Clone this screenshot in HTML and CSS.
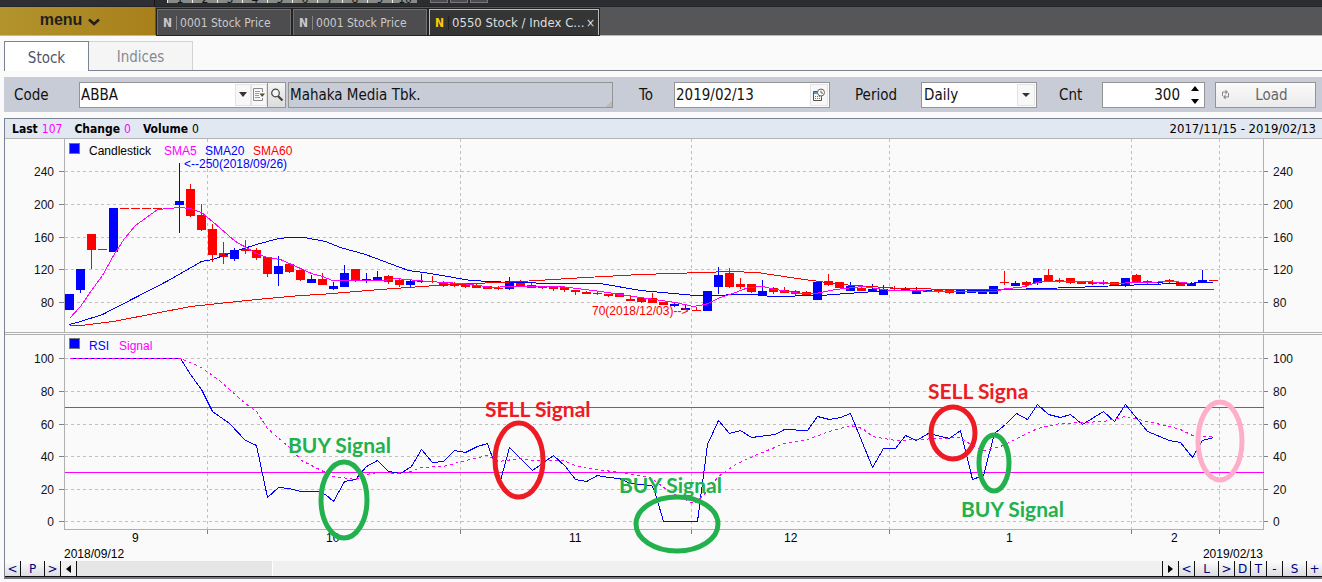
FILE: index.html
```
<!DOCTYPE html>
<html lang="en">
<head>
<meta charset="utf-8">
<title>0550 Stock / Index Chart</title>
<link rel="stylesheet" href="styles.css">
</head>
<body>
<div class="topstrip">
  <div class="pages">
    <button>1</button><button>2</button><button>3</button><button>4</button><button>5</button><button>6</button><button>7</button><button>8</button><button>9</button><button>10</button>
  </div>
  <div class="minis"><i></i><i></i><i></i></div>
</div>

<header class="appbar">
  <button class="menu">menu
    <svg width="12" height="8" viewBox="0 0 12 8"><path d="M1 1.5 6 6 11 1.5" fill="none" stroke="#231f20" stroke-width="2.6"/></svg>
  </button>
  <nav class="windows">
    <button class="win"><b>N</b><span>0001 Stock Price</span></button>
    <button class="win"><b>N</b><span>0001 Stock Price</span></button>
    <button class="win win-active"><b>N</b><span>0550 Stock / Index C...</span><em>×</em></button>
  </nav>
</header>

<div class="tabs" role="tablist">
  <button class="tab tab-active" role="tab" aria-selected="true">Stock</button>
  <button class="tab" role="tab" aria-selected="false">Indices</button>
</div>

<form class="toolbar">
  <label class="lbl-code" for="code">Code</label>
  <div class="field field-code">
    <input id="code" type="text" value="ABBA">
    <button type="button" class="inner" aria-label="Recent codes"><svg width="8" height="5" viewBox="0 0 8 5"><path d="M0 0h8L4 5z" fill="#333"/></svg></button>
    <button type="button" class="inner" aria-label="Code list"><svg width="14" height="14" viewBox="0 0 14 14"><path d="M10.500 4V.5H1.500v12h9V10" fill="none" stroke="#8a8a8a"/><path d="M3 3.500h5M3 5.500h4M3 7.500h4M3 9.500h5" stroke="#999"/><path d="M7.500 5.500h5.500L10.200 9z" fill="#54502c"/></svg></button>
  </div>
  <button type="button" class="search" aria-label="Search"><svg width="14" height="14" viewBox="0 0 14 14"><circle cx="5.500" cy="5" r="3.800" fill="#f4f4f4" stroke="#444" stroke-width="1.200"/><path d="M8 8l4.500 4.500" stroke="#444" stroke-width="2.200"/></svg></button>
  <input class="name" type="text" value="Mahaka Media Tbk." readonly aria-label="Name">
  <label class="lbl-to" for="to">To</label>
  <div class="field field-date">
    <input id="to" type="text" value="2019/02/13">
    <button type="button" class="inner" aria-label="Calendar"><svg width="14" height="14" viewBox="0 0 14 14"><path d="M7 3.500H1.500v9h8V9" fill="none" stroke="#55553f"/><path d="M2 4h4v2H2z" fill="#5b9bc8"/><path d="M3 8.500h5M3 10.500h5" stroke="#77776a" stroke-dasharray="1 1"/><circle cx="9" cy="4.500" r="3.500" fill="#fff" stroke="#66665a"/><path d="M9 2.500v2.500h2M9.500 8v2" fill="none" stroke="#66665a"/></svg></button>
  </div>
  <label class="lbl-period" for="period">Period</label>
  <div class="field field-period">
    <select id="period"><option>Daily</option><option>Weekly</option><option>Monthly</option></select>
    <span class="inner"><svg width="8" height="4" viewBox="0 0 8 4"><path d="M0 0h8L4 4z" fill="#333"/></svg></span>
  </div>
  <label class="lbl-cnt" for="cnt">Cnt</label>
  <div class="field field-cnt">
    <input id="cnt" type="text" inputmode="numeric" value="300">
    <div class="spin">
      <button type="button" aria-label="Increase"><svg width="8" height="5" viewBox="0 0 8 5"><path d="M0 5h8L4 0z"/></svg></button>
      <button type="button" aria-label="Decrease"><svg width="8" height="5" viewBox="0 0 8 5"><path d="M0 0h8L4 5z"/></svg></button>
    </div>
  </div>
  <button type="button" class="load"><svg width="9" height="11" viewBox="0 0 9 11"><path d="M1.500 7V3h4M7.500 4v4h-4" fill="none" stroke="#888"/><path d="M4.500.5v5L7 3zM4.500 5.500v5L2 8z" fill="#888"/></svg><span>Load</span></button>
</form>

<main class="panel">
  <div class="quote">
    <b>Last</b><span class="up">107</span><b>Change</b><span class="up">0</span><b>Volume</b><span>0</span>
    <span class="range">2017/11/15 - 2019/02/13</span>
  </div>
  <svg class="chart" id="chart" viewBox="5 139 1317 422" role="img" aria-label="ABBA daily candlestick and RSI">
    <g class="grid" id="grid"></g>
    <g class="axis" id="axis"></g>
    <g id="candles" shape-rendering="crispEdges"></g>
    <g class="lines" transform="translate(0.5 0.5)">
      <polyline class="blue" points="69,324 80,321 102,314 135,297 168,280 201,261 212,259 240,249 256,244 278,238 290,237 304,237 325,241 340,247 365,254 408,270 430,273 470,280 510,282 560,283 600,283 640,290 695,295 757,294 770,296 820,295 860,292 890,290 955,291 1010,289 1073,287 1120,285 1175,283 1213,282"/>
      <polyline class="red" points="69,325 80,325 113,321 190,306 256,299 300,295 320,294 380,289 450,284 520,281 585,277 640,274 702,272 730,271 757,272 790,277 840,284 900,288 960,289 1213,289"/>
      <polyline class="pink" points="69,318 80,306 91,290 102,275 113,255 124,238 135,225 157,209 168,208 179,207 190,208 201,212 212,221 235,241 256,253 267,257 280,259 300,268 311,273 322,276 332,280 384,280 395,278 428,281 461,283 494,287 505,286 560,286 600,291 640,297 675,302 693,306 705,304 720,297 735,292 748,287 762,286 775,289 800,293 815,293 835,289 862,286 890,290 960,291 995,291 1005,288 1020,287 1040,281 1087,281 1110,283 1140,282 1175,281 1190,283"/>
      <path class="pink" d="M64 407H1263M64 472H1263"/>
      <polyline class="blue" points="69,358 180,358 190,374 201,389 212,411 229,423 245,440 256,445 267,497 278,487 289,488 300,491 317,491 325,494 333,501 344,481 355,479 366,466 377,460 388,471 400,473 411,466 421,449 432,462 443,461 454,450 465,452 477,446 487,443 500,480 509,447 520,458 532,470 553,455 565,466 575,479 586,481 597,475 608,477 619,478 630,483 651,485 654,490 663,521 697,521 707,444 718,420 729,433 740,430 751,437 775,434 784,429 807,430 817,416 829,419 840,417 850,413 872,467 883,448 895,448 905,435 916,440 928,433 949,438 960,430 972,479 983,475 994,433 1005,424 1016,413 1027,419 1037,404 1048,414 1060,417 1070,414 1082,424 1103,411 1114,421 1125,404 1147,431 1169,440 1180,442 1192,457 1202,440 1213,437"/>
      <polyline class="pink dash" points="69,358 180,358 201,367 212,375 220,381 245,403 256,411 267,428 290,448 301,460 325,472 333,476 355,479 366,474 377,472 400,473 411,471 421,467 443,466 465,460 487,455 498,461 520,458 532,460 563,460 575,465 597,469 619,472 650,477 670,492 693,503 703,495 718,476 735,464 757,454 784,443 807,439 829,431 850,425 862,428 872,436 895,440 960,437 970,444 983,450 1000,446 1037,428 1060,423 1082,422 1103,421 1125,416 1147,421 1169,426 1180,429 1192,435 1213,436"/>
    </g>
    <g class="key"><rect x="69.500" y="143.500" width="10" height="10"/><rect x="69.500" y="338.500" width="10" height="10"/></g>
    <g class="legend">
      <text x="89" y="155">Candlestick</text>
      <text x="164" y="155" fill="#f0f">SMA5</text>
      <text x="205" y="155" fill="#00f">SMA20</text>
      <text x="253" y="155" fill="#f00">SMA60</text>
      <text x="184" y="168" fill="#00f">&lt;--250(2018/09/26)</text>
      <text x="592" y="315" fill="#f00">70(2018/12/03)--&gt;</text>
      <text x="89" y="350" fill="#00f">RSI</text>
      <text x="119" y="350" fill="#f0f">Signal</text>
      <text x="132" y="542">9</text>
      <text x="326" y="542">10</text>
      <text x="569" y="542">11</text>
      <text x="784" y="542">12</text>
      <text x="1006" y="542">1</text>
      <text x="1171" y="542">2</text>
      <text x="64" y="558">2018/09/12</text>
      <text x="1263" y="558" text-anchor="end">2019/02/13</text>
    </g>
    <g class="marks">
      <ellipse cx="344" cy="500" rx="23" ry="38" stroke="#22b14c"/>
      <ellipse cx="519" cy="460" rx="24" ry="37" stroke="#ed1c24"/>
      <ellipse cx="677" cy="524" rx="41" ry="27" stroke="#22b14c"/>
      <ellipse cx="953" cy="433" rx="22" ry="26" stroke="#ed1c24"/>
      <ellipse cx="994" cy="463" rx="15" ry="28" stroke="#22b14c"/>
      <ellipse cx="1220" cy="441" rx="22" ry="39" stroke="#ffaec9"/>
    </g>
    <g class="notes">
      <text x="288" y="453" fill="#22b14c">BUY Signal</text>
      <text x="485" y="417" fill="#ed1c24">SELL Signal</text>
      <text x="619" y="493" fill="#22b14c">BUY Signal</text>
      <text x="928" y="399" fill="#ed1c24">SELL Signa</text>
      <text x="961" y="517" fill="#22b14c">BUY Signal</text>
    </g>
  </svg>
  <div class="scroll">
    <button>&lt;</button><button class="wide">P</button><button>&gt;</button>
    <button class="arrow" aria-label="Scroll left"><svg width="5" height="8" viewBox="0 0 5 8"><path d="M5 0v8L0 4z"/></svg></button>
    <div class="track"><div class="thumb"></div></div>
    <button class="arrow" aria-label="Scroll right"><svg width="5" height="8" viewBox="0 0 5 8"><path d="M0 0v8L5 4z"/></svg></button>
    <button>&lt;</button><button class="wide">L</button><button>&gt;</button><button>D</button><button>T</button><button>-</button><button class="wide">S</button><button>+</button>
  </div>
</main>
<script src="chart.js"></script>
</body>
</html>
```

FILE: chart.js
```
const NS = 'http://www.w3.org/2000/svg';
const add = (parent, tag, attrs, text) => {
  const node = document.createElementNS(NS, tag);
  for (const key in attrs) node.setAttribute(key, attrs[key]);
  if (text !== undefined) node.textContent = text;
  parent.appendChild(node);
};
const grid = document.getElementById('grid');
const axis = document.getElementById('axis');
const candles = document.getElementById('candles');

// Vertical month lines
[207, 460, 691, 889, 1131, 1219].forEach(x => {
  add(grid, 'path', { d: `M${x + 0.5} 139V332M${x + 0.5} 335V529` });
  add(axis, 'path', { d: `M${x + 0.5} 529V534`, class: 'tick' });
});

// Value lines with a label on each side
const rows = [[240, 171], [200, 204], [160, 237], [120, 269], [80, 302],
  [100, 358], [80, 391], [60, 424], [40, 456], [20, 489], [0, 521]];
rows.forEach(([value, y]) => {
  add(grid, 'path', { d: `M65 ${y + 0.5}H1263` });
  add(axis, 'path', { d: `M59 ${y + 0.5}H64M1264 ${y + 0.5}H1268`, class: 'tick' });
  add(axis, 'text', { x: 54, y: y + 5, 'text-anchor': 'end' }, value);
  add(axis, 'text', { x: 1273, y: y + 5 }, value);
});
add(axis, 'path', { d: 'M64.5 139V332M64.5 335V529.5H1263.5V335M1263.5 332V139M5 332.5H1322M5 334.5H1322' });

// One row per day: colour, high, low, body top, body bottom
const days = `b294,310,294,310 b269,293,269,290 r234,269,234,250 r249,250,249,250 b208,252,208,252
r208,209,208,209 r208,209,208,209 r208,209,208,209 r208,209,208,209 r208,209,208,209
b163,233,201,205 r184,217,189,216 r204,231,215,230 r224,262,229,255 r242,264,253,257
b248,261,250,259 r240,254,249,251 r248,260,250,258 r257,277,257,274 b256,286,266,274
r264,273,264,272 r270,281,270,280 b275,283,279,283 r273,285,279,285 b282,290,286,289
b265,287,273,287 r269,282,269,280 b273,283,279,280 b271,280,277,280 r275,284,276,282
r278,287,280,285 b279,287,281,285 b274,283,281,282 r276,283,281,282 r281,287,282,286
r282,287,283,286 r284,288,284,287 r284,288,285,288 r286,289,286,289 r286,290,288,289
b277,290,281,289 r280,286,281,286 r283,288,285,288 r286,289,286,288 r286,291,286,289
r287,292,287,290 r290,295,290,292 r291,294,292,294 r292,295,293,294 r294,297,294,296
r293,297,293,297 r296,301,299,301 r298,303,298,302 r293,303,298,303 r302,305,302,305
b303,307,304,306 b305,310,308,310 r307,311,310,311 b291,311,291,311 b267,294,275,287
r268,288,273,287 r278,289,284,287 r284,293,284,292 b280,296,291,296 r287,294,288,292
r287,293,290,293 r290,295,291,294 r291,295,292,295 b281,300,282,300 r274,286,281,285
r282,288,282,288 b282,291,286,291 r287,291,288,291 b284,291,289,291 b285,295,289,295
r286,290,288,289 b287,291,289,290 b287,294,291,294 b290,292,290,291 r289,293,289,292
r289,294,290,293 b290,294,290,294 b290,293,290,293 b290,294,290,294 b286,294,286,294
r271,285,282,283 b281,286,283,286 r281,287,282,285 b278,285,278,283 r269,281,275,281
r278,283,280,281 r278,284,278,283 r281,284,281,284 r280,285,282,284 r280,285,282,284
r282,286,282,286 b278,287,278,286 r274,282,275,282 r280,284,281,283 b282,285,282,283
r279,283,280,282 r282,286,282,286 b282,286,283,286 b270,282,280,282 r280,281,280,281`.split(/\s+/);
days.forEach((day, i) => {
  const [high, low, top, bottom] = day.slice(1).split(',').map(Number);
  const fill = day[0] === 'b' ? '#00f' : '#f00';
  add(candles, 'rect', { x: 69 + 11 * i, y: high, width: 1, height: low - high, fill });
  add(candles, 'rect', { x: 65 + 11 * i, y: top, width: 9, height: bottom - top, fill });
});
```

FILE: styles.css
```
* { box-sizing: border-box; }
body {
  margin: 0;
  background: #fafafa;
  font-family: "DejaVu Sans Condensed", "Noto Sans", sans-serif;
  font-size: 15px;
  color: #111;
}
button, input, select { font: inherit; color: inherit; margin: 0; padding: 0; border: 0; background: none; border-radius: 0; }
svg { display: block; flex: none; }

.topstrip { display: flex; gap: 13px; height: 7px; padding-left: 167px; background: linear-gradient(90deg, #2d2f34 154px, #17181a 154px, #17181a 155px, #2b2d31 155px); border-bottom: 1px solid #242528; }
.pages { display: flex; height: 3px; overflow: hidden; align-items: flex-end; }
.pages button { width: 25px; height: 8px; border-left: 1px solid #eee; background: #888b85; color: #111; font-size: 12px; line-height: 8px; flex: none; }
.minis { display: flex; gap: 2px; }
.minis i { width: 18px; height: 3px; background: #4c4c4e; border: 1px solid #77777a; border-top: 0; }

.appbar { display: flex; height: 29px; background: #565558; border-bottom: 1px solid #b8b8b8; }
.menu { display: flex; align-items: center; justify-content: center; gap: 6px; width: 155px; padding: 0 15px 2px 0; background: linear-gradient(100deg, #b2942c, #a87f1b); color: #231f20; font: bold 16px "Liberation Sans", sans-serif; }
.menu svg { margin-top: 3px; }
.windows { display: flex; gap: 2px; padding: 2px 0 0 2px; }
.win { display: flex; align-items: center; width: 134px; height: 26px; padding-left: 5px; background: #4d4d4f; border: 1px solid #707072; border-bottom: 0; outline: 1px solid #222325; color: #c9c9c9; font-size: 12px; white-space: nowrap; }
.win b { padding-right: 4px; margin-right: 3px; border-right: 1px solid #858585; line-height: 14px; }
.win-active { width: 170px; background: #353535; border-color: #bbb; color: #ddd; }
.win-active span { font-size: 13px; }
.win-active b { color: #fc0; border-color: #222; }
.win em { margin-left: auto; padding-right: 3px; font-style: normal; }

.tabs { display: flex; height: 35px; margin-left: 4px; padding-top: 5px; border-bottom: 1px solid #7d8291; }
.tab { width: 104px; padding-top: 2px; border: 1px solid #d3d3d6; border-left: 0; border-bottom: 0; background: #f5f5f5; color: #858a93; }
.tab-active { width: 85px; height: 30px; border: 1px solid #7d8291; border-bottom: 0; background: #fff; color: #4d5669; }

.toolbar { display: flex; align-items: center; height: 35px; margin: 6px 0 0 4px; padding: 0 6px 0 10px; background: #c8ccd6; }
.field, .name { display: flex; height: 26px; border: 1px solid #949494; background: #fff; }
.field input { flex: 1; min-width: 0; padding-left: 1px; }
.inner { display: flex; align-items: center; justify-content: center; width: 16px; height: 22px; margin: 1px 0; background: #f8f8f8; border: 1px solid #e3e3e3; }
.lbl-code { width: 65px; }
.field-code { width: 189px; }
.search { display: flex; align-items: center; justify-content: center; width: 18px; height: 26px; border: 1px solid #949494; border-left: 0; background: linear-gradient(#f4f4f4, #dcdcdc); }
.name { flex: 1; min-width: 90px; margin-left: 2px; padding-left: 1px; background: linear-gradient(135deg, #c8ccd6 98%, #bbb 98%); }
.lbl-to { width: 61px; padding-left: 26px; }
.field-date { width: 156px; }
.field-date .inner { width: 18px; margin-right: 1px; }
.lbl-period { width: 91px; padding-left: 25px; }
.field-period { position: relative; width: 116px; }
.field-period select { width: 100%; padding-left: 2px; appearance: none; }
.field-period .inner { position: absolute; right: 1px; top: 0; width: 18px; pointer-events: none; }
.lbl-cnt { width: 65px; padding-left: 22px; }
.field-cnt { width: 103px; }
.field-cnt input { text-align: right; }
.spin { display: flex; flex-direction: column; justify-content: space-between; width: 24px; padding: 3px 5px 3px 11px; }
.spin button { display: block; }
.load { display: flex; align-items: center; width: 101px; height: 26px; margin-left: 10px; padding-left: 5px; border: 1px solid #949494; background: linear-gradient(#fafafa, #ebebeb); color: #666; }
.load span { flex: 1; padding-right: 2px; }

.panel { margin: 6px 0 4px 4px; border: 1px solid #7d8291; border-right: 0; border-bottom: 2px solid #77777f; }
.quote { display: flex; align-items: center; height: 20px; padding: 0 6px 0 7px; background: #e2e8f2; border-bottom: 1px solid #b4b4b4; font-size: 12px; color: #000; }
.quote b { margin-right: 4px; }
.quote span { margin-right: 12px; }
.quote .up { color: #f0f; }
.quote .range { margin: 0 0 0 auto; font-size: 13px; }

.chart { width: 100%; height: auto; font-family: "Liberation Sans", Arial, sans-serif; }
.grid path { stroke: #c0c0c0; stroke-dasharray: 3 3; shape-rendering: crispEdges; }
.axis path { fill: none; stroke: #b0b0b0; shape-rendering: crispEdges; }
.axis .tick { stroke: #7d8291; }
.axis text { font-size: 12px; fill: #111; }
.lines * { fill: none; stroke-width: 1; shape-rendering: crispEdges; }
.lines .blue { stroke: #00f; }
.lines .red { stroke: #f00; }
.lines .pink { stroke: #f0f; }
.lines .dash { stroke-dasharray: 3 3; }
.key rect { fill: #00f; stroke: #777; }
.legend { font-size: 12px; }
.marks ellipse { fill: none; stroke-width: 5; }
.notes { font: bold 21px Lato, sans-serif; }

.scroll { display: flex; height: 16px; background: #111; gap: 1px; padding-bottom: 1px; }
.scroll button { display: flex; align-items: center; justify-content: center; width: 15px; background: linear-gradient(#fdfdfd, #dcdce2); color: #00007b; font: 12px/14px "DejaVu Sans", sans-serif; }
.scroll .wide { width: 23px; }
.scroll .arrow { background: #f0f0f0; }
.track { flex: 1; background: #e6e6e6; }
.thumb { width: 82%; height: 100%; margin-left: 18%; background: #f0f0f0; border-left: 1px solid #fff; }
```
